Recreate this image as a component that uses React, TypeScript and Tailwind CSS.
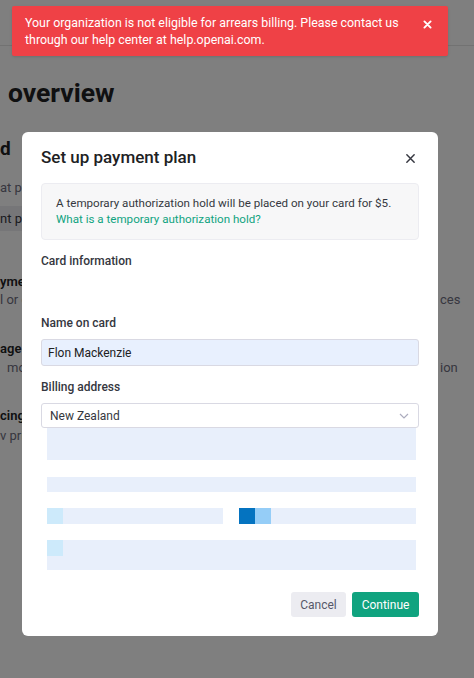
import React from "react";

const font = { fontFamily: "Roboto, 'Liberation Sans', sans-serif" };

function XIcon({ className, stroke = 2 }: { className?: string; stroke?: number }) {
  return (
    <svg viewBox="0 0 16 16" className={className} fill="none" stroke="currentColor" strokeWidth={stroke} strokeLinecap="round">
      <path d="M3.5 3.5l9 9M12.5 3.5l-9 9" />
    </svg>
  );
}

export default function App() {
  return (
    <div className="relative w-[474px] h-[678px] overflow-hidden bg-white text-[#202123]" style={font}>
      {/* background page */}
      <div className="flex flex-col">
        <div className="h-[46px] border-b border-[#e5e5e5]" />
        <div className="h-[94px] flex items-center pl-[8px] pb-[1px]">
          <h1 className="text-[26.5px] font-bold">overview</h1>
        </div>
        <div className="h-[18px] flex items-center text-[19px] font-bold">d</div>
        <div className="h-[37px] mt-[11px] flex items-center text-[13px] text-[#6e6e80]">at pl</div>
        <div className="h-[25px] flex items-center">
          <div className="h-[25px] w-[40px] bg-[#ececf1] rounded-r flex items-center text-[13px] text-[#353740]">nt pl</div>
        </div>
        <div className="h-[18px] mt-[42px] flex items-center text-[13px] font-semibold">yme</div>
        <div className="h-[18px] flex items-center justify-between text-[13px] text-[#6e6e80]">
          <span>l or c</span>
          <span className="w-[34px]">ces</span>
        </div>
        <div className="h-[18px] mt-[31px] flex items-center text-[13px] font-semibold">age</div>
        <div className="h-[18px] mt-[1px] flex items-center justify-between text-[13px] text-[#6e6e80]">
          <span className="pl-[7px]">mor</span>
          <span className="w-[34px]">ion</span>
        </div>
        <div className="h-[18px] mt-[30px] flex items-center text-[13px] font-semibold">cing</div>
        <div className="h-[18px] mt-[2px] flex items-center text-[13px] text-[#6e6e80]">v pri</div>
      </div>

      {/* overlay */}
      <div className="absolute inset-0 bg-black/50" />

      {/* error banner */}
      <div className="absolute left-[12px] top-[6px] w-[436px] h-[50px] bg-[#ef4146] rounded-[2px] flex items-start pl-[13px] pr-[15px] pt-[8px] text-white shadow">
        <p className="flex-1 text-[12.4px] leading-[17px]">
          Your organization is not eligible for arrears billing. Please contact us through our help center at help.openai.com.
        </p>
        <XIcon className="w-[11px] h-[11px] mt-[5px] ml-2" stroke={2.8} />
      </div>

      {/* modal */}
      <div className="absolute left-[22px] top-[132px] w-[416px] h-[504px] bg-white rounded-[6px] px-[19px] flex flex-col">
        <div className="h-[22px] mt-[15px] flex items-center justify-between">
          <h2 className="text-[17px] font-medium text-[#202123]">Set up payment plan</h2>
          <XIcon className="w-[13px] h-[13px] mr-[2px] text-[#353740]" stroke={1.8} />
        </div>
        <div className="mt-[14px] h-[57px] bg-[#f7f7f8] rounded-[4px] border border-[#ececf1] px-[14px] pt-[11px] text-[11.6px] leading-[16px]">
          <p className="text-[#353740]">A temporary authorization hold will be placed on your card for $5.</p>
          <p className="text-[#10a37f]">What is a temporary authorization hold?</p>
        </div>
        <div className="mt-[13px] h-[16px] flex items-center text-[12px] font-medium text-[#353740]">Card information</div>
        <div className="mt-[46px] h-[16px] flex items-center text-[12px] font-medium text-[#353740]">Name on card</div>
        <div className="mt-[8px] h-[27px] bg-[#e8f0fe] border border-[#d9d9e3] rounded-[3px] flex items-center px-[6px] text-[12px] text-[#202123]">
          Flon Mackenzie
        </div>
        <div className="mt-[13px] h-[16px] flex items-center text-[12px] font-medium text-[#353740]">Billing address</div>
        <div className="mt-[8px] h-[25px] bg-white border border-[#d9d9e3] rounded-[3px] flex items-center justify-between pl-[8px] pr-[8px] text-[12px] text-[#353740]">
          <span>New Zealand</span>
          <svg viewBox="0 0 12 12" className="w-[12px] h-[12px] text-[#acacbe]" fill="none" stroke="currentColor" strokeWidth={1.2}>
            <path d="M2 4l4 4 4-4" />
          </svg>
        </div>
        {/* placeholder address fields */}
        <div className="ml-[6px] mr-[3px] flex flex-col">
          <div className="h-[32px] bg-[#e8effb]" />
          <div className="h-[15px] mt-[17px] bg-[#e8effb]" />
          <div className="h-[16px] mt-[16px] flex gap-[16px]">
            <div className="w-[176px] bg-[#e8effb] flex">
              <div className="w-[16px] bg-[#cdeafb]" />
            </div>
            <div className="flex-1 bg-[#e8effb] flex">
              <div className="w-[16px] bg-[#0473c0]" />
              <div className="w-[16px] bg-[#95cdf7]" />
            </div>
          </div>
          <div className="h-[30px] mt-[16px] bg-[#e8effb] flex items-start">
            <div className="w-[16px] h-[16px] bg-[#cdeafb]" />
          </div>
        </div>
        <div className="mt-[22px] flex justify-end gap-[6px]">
          <button className="h-[25px] w-[55px] rounded-[3px] bg-[#ececf1] text-[12px] text-[#565869]">Cancel</button>
          <button className="h-[25px] w-[67px] rounded-[3px] bg-[#10a37f] text-[12px] text-white">Continue</button>
        </div>
      </div>
    </div>
  );
}
